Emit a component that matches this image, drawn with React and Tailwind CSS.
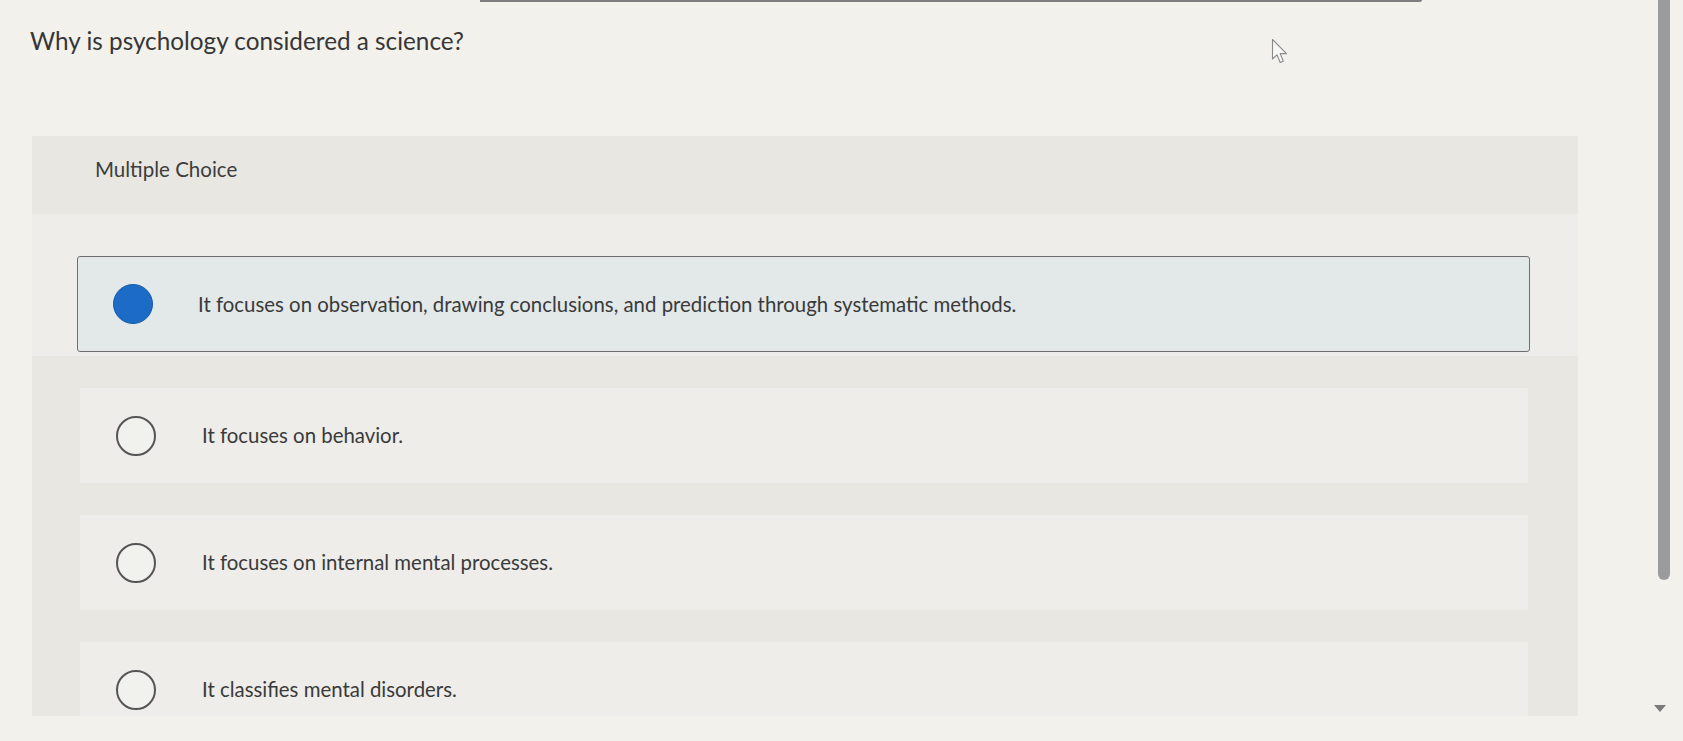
import { Fragment } from "react";

const options = [
  { text: "It focuses on behavior." },
  { text: "It focuses on internal mental processes." },
  { text: "It classifies mental disorders." },
];

function Cursor() {
  return (
    <svg
      className="absolute left-[1271px] top-[38px]"
      width="18"
      height="27"
      viewBox="0 0 18 27"
      fill="none"
    >
      <path
        d="M1.5 1.5 L1.5 21 L6 16.8 L9.2 24.5 L12.3 23.2 L9.2 15.6 L15.5 15.6 Z"
        fill="#f7f7f5"
        stroke="#8a8a8a"
        strokeWidth="1.1"
        strokeLinejoin="round"
      />
    </svg>
  );
}

function Radio({ checked }) {
  if (checked) {
    return <div className="w-[40px] h-[40px] rounded-full bg-[#1c6bc6] border border-[#1a5ca8] shrink-0" />;
  }
  return <div className="w-[40px] h-[40px] rounded-full border-2 border-[#555555] bg-[#f1f1ee] shrink-0" />;
}

export default function App() {
  return (
    <div className="relative w-[1683px] h-[741px] overflow-hidden bg-[#f2f1ec] font-['Lato',sans-serif] text-[#3b3b3b]">
      <div className="flex">
        <div className="w-[1650px]">
          <div className="ml-[480px] w-[942px] h-[2px] bg-[#7f7f7f] rounded-br-sm" />

          <h1 className="ml-[30px] mt-[24px] text-[24.3px] leading-[30px] text-[#363636]">
            Why is psychology considered a science?
          </h1>

          <section className="ml-[32px] mt-[80px] w-[1546px] h-[580px] overflow-hidden bg-[#e8e7e2]">
            <div className="h-[78px] pl-[63px] pt-[19px]">
              <span className="text-[20.5px] leading-[28px] text-[#3d3d3d]">Multiple Choice</span>
            </div>

            <div className="h-[142px] bg-[#eeede9] pt-[42px] pl-[45px]">
              <div className="w-[1453px] h-[96px] rounded-[3px] border border-[#6e6e6e] bg-[#e3e8e9] flex items-center pl-[35px]">
                <Radio checked />
                <span className="ml-[45px] text-[20.4px] text-[#3a3a3a]">
                  It focuses on observation, drawing conclusions, and prediction through systematic methods.
                </span>
              </div>
            </div>

            {options.map((o) => (
              <Fragment key={o.text}>
                <div className="h-[32px] shrink-0" />
                <div className="ml-[48px] w-[1448px] h-[95px] bg-[#eeede9] flex items-center pl-[36px]">
                  <Radio />
                  <span className="ml-[46px] text-[20.4px] text-[#3a3a3a]">{o.text}</span>
                </div>
              </Fragment>
            ))}
          </section>
        </div>

        <div className="w-[33px] flex flex-col items-start">
          <div className="ml-[8px] w-[12px] h-[580px] bg-[#9b9b9b] rounded-b-full" />
          <svg className="ml-[3px] mt-[124px]" width="14" height="9" viewBox="0 0 14 9">
            <path d="M1 1 L13 1 L7 8 Z" fill="#7a7a7a" />
          </svg>
        </div>
      </div>

      <Cursor />
    </div>
  );
}
